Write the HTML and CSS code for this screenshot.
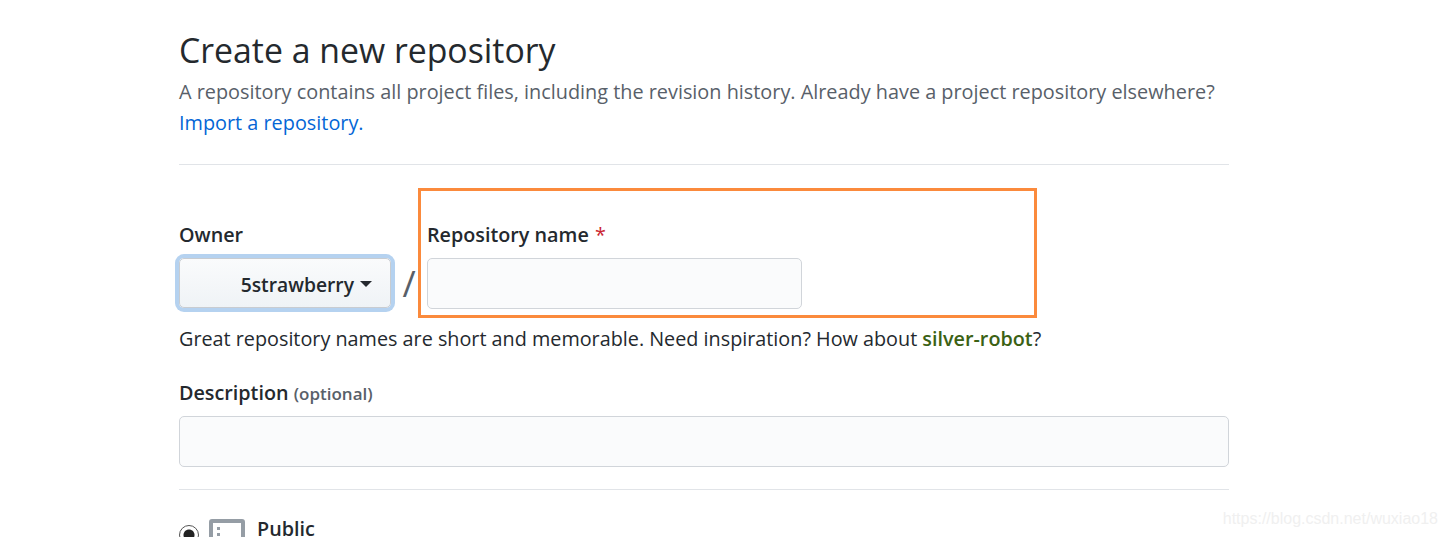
FILE: index.html
```html
<!DOCTYPE html>
<html lang="en">
<head>
  <meta charset="UTF-8">
  <title>Create a new repository</title>
  <link rel="stylesheet" href="styles.css">
</head>
<body>

  <main class="container">

    <!-- Heading -->
    <header class="page-head">
      <h1>Create a new repository</h1>
      <p class="lead">A repository contains all project files, including the revision history. Already have a project repository elsewhere?<br><a href="#">Import a repository.</a></p>
    </header>

    <!-- Owner / name -->
    <div class="owner-row">
      <div class="field">
        <label>Owner</label>
        <button class="owner-btn">5strawberry<span class="caret"></span></button>
      </div>
      <span class="slash">/</span>
      <div class="field">
        <label>Repository name <span class="required">*</span></label>
        <input class="text-input name-input" type="text">
      </div>
    </div>

    <p class="hint">Great repository names are short and memorable. Need inspiration? How about <strong class="suggestion">silver-robot</strong>?</p>

    <!-- Description -->
    <div class="field description">
      <label>Description <span class="optional">(optional)</span></label>
      <input class="text-input" type="text">
    </div>

    <hr class="divider">

    <!-- Visibility -->
    <div class="visibility">
      <span class="radio"></span>
      <svg class="repo-icon" width="36" height="36" viewBox="0 0 36 36">
        <path fill="#959da5" fill-rule="evenodd" d="M3 0h30a3 3 0 0 1 3 3v33h-36V3a3 3 0 0 1 3-3zM4 4v32h28V4z"/>
        <path fill="#959da5" d="M8 8h3v3H8zM8 14h3v3H8z"/>
      </svg>
      <strong class="vis-label">Public</strong>
    </div>

  </main>

  <!-- Annotation and watermark on top of the screenshot -->
  <div class="callout"></div>
  <div class="watermark">https://blog.csdn.net/wuxiao18</div>

</body>
</html>
```

FILE: styles.css
```css
/* Base styles */
html, body {
  height: 537px;
  overflow: hidden;
}

body {
  margin: 0;
  background-color: #fff;
  color: #24292e;
  font-family: "Open Sans", "Noto Sans", sans-serif;
  position: relative;
}

.container {
  width: 1050px;
  margin-left: 179px;
}

/* Heading */
.page-head {
  padding-top: 26px;
  padding-bottom: 26px;
  border-bottom: 1px solid #e1e4e8;
}

h1 {
  margin: 0;
  font-size: 33.8px;
  font-weight: 400;
  line-height: 48px;
}

.lead {
  margin: 2px 0 0;
  font-size: 19.85px;
  line-height: 31px;
  color: #586069;
}

.lead a {
  color: #0366d6;
  text-decoration: none;
}

/* Form */
.owner-row {
  display: flex;
  align-items: flex-end;
  margin-top: 55px;
}

.field label {
  display: block;
  font-size: 19.75px;
  font-weight: 600;
  line-height: 30px;
  margin-bottom: 8px;
}

.required {
  margin-left: 1px;
  color: #cb2431;
  font-weight: 400;
}

.optional {
  font-size: 17px;
  color: #586069;
}

.owner-btn {
  display: flex;
  align-items: center;
  justify-content: flex-end;
  width: 212px;
  height: 50px;
  margin-bottom: 1px;
  padding: 2px 18px 0 0;
  box-sizing: border-box;
  background: linear-gradient(#fafbfc, #eff3f6);
  border: 1px solid #c8ccd1;
  border-radius: 5px;
  box-shadow: 0 0 0 4px #b5d2f0;
  color: #24292e;
  font-family: inherit;
  font-size: 19.3px;
  font-weight: 600;
}

.caret {
  width: 0;
  height: 0;
  margin-left: 6px;
  border-style: solid;
  border-width: 6px 6px 0;
  border-color: #24292e transparent transparent;
}

.slash {
  width: 36px;
  text-align: center;
  font-size: 36px;
  line-height: 51px;
  color: #586069;
}

.text-input {
  display: block;
  width: 100%;
  height: 51px;
  box-sizing: border-box;
  background-color: #fafbfc;
  border: 1px solid #d1d5da;
  border-radius: 5px;
}

.name-input {
  width: 375px;
}

.hint {
  margin: 15px 0 0;
  font-size: 19.8px;
  line-height: 30px;
}

.suggestion {
  color: #3b6114;
  font-weight: 600;
}

.description {
  margin-top: 24px;
}

.description label {
  margin-bottom: 7px;
}

.divider {
  margin: 22px 0 0;
  border: 0;
  border-top: 1px solid #e1e4e8;
}

/* Visibility */
.visibility {
  display: flex;
  align-items: flex-start;
  margin-top: 29px;
}

.radio {
  width: 20px;
  height: 20px;
  margin-top: 6px;
  box-sizing: border-box;
  border: 1.5px solid #555;
  border-radius: 50%;
  background: radial-gradient(circle, #222 0 5px, #fff 6px);
}

.repo-icon {
  margin-left: 10px;
}

.vis-label {
  margin-left: 12px;
  font-size: 19.75px;
  font-weight: 600;
  line-height: 20px;
}

/* Annotation on top of the screenshot */
.callout {
  position: absolute;
  left: 418px;
  top: 188px;
  width: 619px;
  height: 130px;
  box-sizing: border-box;
  border: 3px solid #fb8a3c;
}

.watermark {
  position: absolute;
  right: 8px;
  top: 509px;
  font-family: "Liberation Sans", sans-serif;
  font-size: 16px;
  line-height: 20px;
  color: #f0f0f0;
}
```
